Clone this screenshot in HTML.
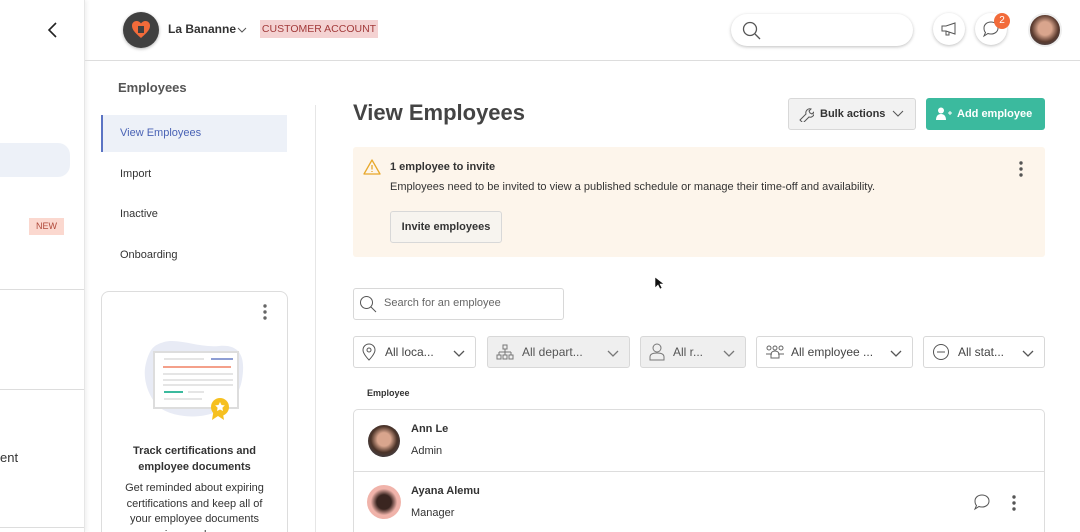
<!DOCTYPE html>
<html><head><meta charset="utf-8"><style>
*{box-sizing:border-box;margin:0;padding:0}
html,body{width:1080px;height:532px;overflow:hidden}
body{background:#fff;font-family:"Liberation Sans",sans-serif;color:#333;position:relative}
.a{position:absolute}
.dd{position:absolute;top:336px;height:32px;border:1px solid #d8d8d8;border-radius:3px;font-size:12px;color:#444;display:flex;align-items:center;padding-left:8px}
.dd .ch{position:absolute;right:10px;top:13px}
</style></head><body>
<div class="a" style="left:0;top:0;width:85px;height:532px;background:#fff;border-right:1px solid #e6e6e6;box-shadow:2px 0 4px rgba(0,0,0,.06)"></div>
<svg class="a" style="left:47px;top:22px" width="12" height="16"><path d="M9 1L2 8l7 7" stroke="#222" stroke-width="1.6" fill="none"/></svg>
<div class="a" style="left:0;top:143px;width:70px;height:34px;background:#edf1f8;border-radius:0 12px 12px 0"></div>
<div class="a" style="left:29px;top:218px;width:35px;height:17px;background:#fbd8cf;color:#b0493a;font-size:9px;text-align:center;line-height:17px">NEW</div>
<div class="a" style="left:0;top:289px;width:84px;border-top:1px solid #ddd"></div>
<div class="a" style="left:0;top:389px;width:84px;border-top:1px solid #ddd"></div>
<div class="a" style="left:0;top:527px;width:84px;border-top:1px solid #ddd"></div>
<div class="a" style="left:0;top:450px;font-size:13px;color:#333">ent</div>
<div class="a" style="left:85px;top:60px;width:995px;border-top:1px solid #ddd"></div>
<div class="a" style="left:123px;top:12px;width:36px;height:36px;border-radius:50%;background:#404040;box-shadow:0 1px 3px rgba(0,0,0,.3)"></div>
<svg class="a" style="left:130px;top:18px" width="22" height="22" viewBox="0 0 22 22"><path d="M11 20C4 14 2 11 2 7.5 2 5 4 3 6.5 3 8.5 3 10 4 11 5.5 12 4 13.5 3 15.5 3 18 3 20 5 20 7.5 20 11 18 14 11 20z" fill="#f26b3a"/><rect x="8" y="8" width="6" height="7" fill="#404040"/></svg>
<div class="a" style="left:168px;top:22px;font-size:12px;color:#333;font-weight:bold">La Bananne</div>
<svg class="a" style="left:237px;top:27px" width="10" height="7"><path d="M1 1l4 4 4-4" stroke="#555" fill="none"/></svg>
<div class="a" style="left:260px;top:20px;width:118px;height:18px;background:#f4d2d2;color:#a33b3b;font-size:10.5px;text-align:center;line-height:18px">CUSTOMER ACCOUNT</div>
<div class="a" style="left:731px;top:14px;width:182px;height:32px;border-radius:16px;box-shadow:0 1px 3px rgba(0,0,0,.25)"></div>
<svg class="a" style="left:742px;top:21px" width="20" height="20"><circle cx="8" cy="8" r="6.5" stroke="#555" stroke-width="1.3" fill="none"/><path d="M13 13l5 5" stroke="#555" stroke-width="1.3"/></svg>
<div class="a" style="left:933px;top:13px;width:32px;height:32px;border-radius:50%;box-shadow:0 1px 3px rgba(0,0,0,.25)"></div>
<svg class="a" style="left:940px;top:21px" width="18" height="16"><path d="M2 5h4l9-3v11l-9-3H2z M6 10v4h3v-3" stroke="#555" fill="none"/></svg>
<div class="a" style="left:975px;top:13px;width:32px;height:32px;border-radius:50%;box-shadow:0 1px 3px rgba(0,0,0,.25)"></div>
<svg class="a" style="left:982px;top:20px" width="18" height="18"><path d="M9 2c4 0 7 2.5 7 6s-3 6-7 6c-1 0-2 0-3-.5L2 16l1.5-3.5C2.5 11.5 2 10 2 8c0-3.5 3-6 7-6z" stroke="#555" fill="none"/></svg>
<div class="a" style="left:994px;top:13px;width:16px;height:16px;border-radius:50%;background:#f26b3a;color:#fff;font-size:10px;text-align:center;line-height:16px">2</div>
<div class="a" style="left:1028px;top:13px;width:34px;height:34px;border-radius:50%;background:radial-gradient(circle at 50% 45%,#d9a58d 30%,#5a3a2e 60%,#3b4a5e 100%);border:2px solid #eee"></div>
<div class="a" style="left:118px;top:80px;font-size:13px;color:#555;font-weight:bold">Employees</div>
<div class="a" style="left:101px;top:115px;width:186px;height:37px;background:#edf1f8;border-left:2px solid #5b74c4"></div>
<div class="a" style="left:120px;top:127px;font-size:11px;color:#4a63b5">View Employees</div>
<div class="a" style="left:120px;top:168px;font-size:11px;color:#333">Import</div>
<div class="a" style="left:120px;top:208px;font-size:11px;color:#333">Inactive</div>
<div class="a" style="left:120px;top:249px;font-size:11px;color:#333">Onboarding</div>
<div class="a" style="left:315px;top:105px;height:427px;border-left:1px solid #e6e6e6"></div>
<div class="a" style="left:101px;top:291px;width:187px;height:250px;border:1px solid #ddd;border-radius:8px"></div>
<svg class="a" style="left:262px;top:303px" width="6" height="18"><circle cx="3" cy="3" r="1.7" fill="#666"/><circle cx="3" cy="9" r="1.7" fill="#666"/><circle cx="3" cy="15" r="1.7" fill="#666"/></svg>
<svg class="a" style="left:144px;top:338px" width="104" height="86" viewBox="0 0 104 86"><path d="M20 4c15-4 35 6 55 4s25 10 24 25-5 30-25 40-50 5-60-5S-2 40 2 25 10 7 20 4z" fill="#e8ebf5"/><rect x="10" y="14" width="84" height="56" fill="#fff" stroke="#ddd" stroke-width="2"/><rect x="20" y="20" width="40" height="2" fill="#e5e5e5"/><rect x="67" y="20" width="22" height="2" fill="#8e9ed4"/><rect x="19" y="28" width="68" height="2" fill="#f4a08a"/><rect x="19" y="35" width="70" height="2" fill="#e5e5e5"/><rect x="19" y="41" width="70" height="2" fill="#e5e5e5"/><rect x="19" y="46" width="70" height="2" fill="#e5e5e5"/><rect x="20" y="53" width="19" height="2" fill="#3bba9e"/><rect x="44" y="53" width="16" height="2" fill="#e5e5e5"/><rect x="20" y="60" width="38" height="2" fill="#e5e5e5"/><path d="M70 70l-2 12 6-4 6 4-2-12z" fill="#f6c020"/><circle cx="76" cy="69" r="9" fill="#f6c020"/><path d="M76 64l1.5 3 3.3.4-2.4 2.3.6 3.3L76 71.5l-3 1.5.6-3.3-2.4-2.3 3.3-.4z" fill="#fff"/></svg>
<div class="a" style="left:101px;top:444px;width:187px;text-align:center;font-size:11px;font-weight:bold;color:#333;line-height:15.5px">Track certifications and<br>employee documents</div>
<div class="a" style="left:101px;top:481px;width:187px;text-align:center;font-size:11px;color:#333;line-height:15.5px">Get reminded about expiring<br>certifications and keep all of<br>your employee documents<br>in one place</div>
<div class="a" style="left:353px;top:100px;font-size:22px;color:#444;font-weight:bold">View Employees</div>
<div class="a" style="left:788px;top:98px;width:128px;height:32px;background:#f2f2f2;border:1px solid #d8d8d8;border-radius:3px"></div>
<svg class="a" style="left:798px;top:106px" width="16" height="16"><path d="M2 14l6-6a4 4 0 0 1 5-5l-2 2 1 2 2 1 2-2a4 4 0 0 1-5 5l-6 6z" stroke="#555" fill="none"/></svg>
<div class="a" style="left:820px;top:108px;font-size:11px;font-weight:bold;color:#333">Bulk actions</div>
<svg class="a" style="left:892px;top:110px" width="12" height="8"><path d="M1 1l5 5 5-5" stroke="#555" fill="none"/></svg>
<div class="a" style="left:926px;top:98px;width:119px;height:32px;background:#3bba9e;border-radius:3px"></div>
<svg class="a" style="left:936px;top:107px" width="16" height="13"><circle cx="5" cy="3.5" r="3" fill="#fff"/><path d="M0 13c0-4 2-6 5-6s5 2 5 6z" fill="#fff"/><path d="M12 6h4M14 4v4" stroke="#fff"/></svg>
<div class="a" style="left:957px;top:108px;font-size:11px;font-weight:bold;color:#fff">Add employee</div>
<div class="a" style="left:353px;top:147px;width:692px;height:110px;background:#fdf5eb;border-radius:3px"></div>
<svg class="a" style="left:363px;top:159px" width="18" height="16"><path d="M9 1L17 15H1z" stroke="#e8a82b" stroke-width="1.3" fill="none" stroke-linejoin="round"/><path d="M9 6v4.5M9 12v1" stroke="#e8a82b" stroke-width="1.3"/></svg>
<div class="a" style="left:390px;top:161px;font-size:11px;font-weight:bold;color:#333">1 employee to invite</div>
<div class="a" style="left:390px;top:181px;font-size:11px;color:#333">Employees need to be invited to view a published schedule or manage their time-off and availability.</div>
<svg class="a" style="left:1018px;top:160px" width="6" height="18"><circle cx="3" cy="3" r="1.7" fill="#555"/><circle cx="3" cy="9" r="1.7" fill="#555"/><circle cx="3" cy="15" r="1.7" fill="#555"/></svg>
<div class="a" style="left:390px;top:211px;width:112px;height:32px;background:#f7f4ef;border:1px solid #d8d8d8;border-radius:3px;font-size:11px;font-weight:bold;color:#333;text-align:center;line-height:30px">Invite employees</div>
<svg class="a" style="left:654px;top:276px" width="10" height="15"><path d="M1 1v11l3-3 2 4 2-1-2-4h4z" fill="#111" stroke="#fff" stroke-width=".6"/></svg>
<div class="a" style="left:353px;top:288px;width:211px;height:32px;border:1px solid #d8d8d8;border-radius:3px"></div>
<svg class="a" style="left:359px;top:295px" width="18" height="18"><circle cx="7.5" cy="7.5" r="6" stroke="#555" fill="none"/><path d="M12 12l5 5" stroke="#555"/></svg>
<div class="a" style="left:384px;top:297px;font-size:11px;color:#666">Search for an employee</div>
<div class="dd" style="left:353px;width:123px"><svg width="14" height="18"><path d="M7 17s-6-6-6-10a6 6 0 0 1 12 0c0 4-6 10-6 10z" stroke="#555" fill="none"/><circle cx="7" cy="7" r="2" stroke="#555" fill="none"/></svg><span style="margin-left:9px">All loca...</span><svg class="ch" width="12" height="8"><path d="M1 1l5 5 5-5" stroke="#555" stroke-width="1.3" fill="none"/></svg></div>
<div class="dd" style="left:487px;width:143px;background:#efefef"><svg width="18" height="16"><path d="M7 1h4v4H7zM9 5v3M3 8h12M3 8v3M9 8v3M15 8v3M1 11h4v4H1zM7 11h4v4H7zM13 11h4v4h-4z" stroke="#777" fill="none"/></svg><span style="margin-left:8px;color:#555">All depart...</span><svg class="ch" width="12" height="8"><path d="M1 1l5 5 5-5" stroke="#777" stroke-width="1.3" fill="none"/></svg></div>
<div class="dd" style="left:640px;width:106px;background:#efefef"><svg width="16" height="18"><circle cx="8" cy="5" r="4" stroke="#777" fill="none"/><path d="M1 17v-3c0-3 3-4 7-4s7 1 7 4v3z" stroke="#777" fill="none"/></svg><span style="margin-left:8px;color:#555">All r...</span><svg class="ch" width="12" height="8"><path d="M1 1l5 5 5-5" stroke="#777" stroke-width="1.3" fill="none"/></svg></div>
<div class="dd" style="left:756px;width:157px"><svg width="20" height="14"><circle cx="4" cy="3" r="2" stroke="#666" fill="none"/><circle cx="10" cy="3" r="2" stroke="#666" fill="none"/><circle cx="16" cy="3" r="2" stroke="#666" fill="none"/><path d="M1 9h6M13 9h6M6 13V9a4 3 0 0 1 8 0v4z" stroke="#666" fill="none"/></svg><span style="margin-left:6px">All employee ...</span><svg class="ch" width="12" height="8"><path d="M1 1l5 5 5-5" stroke="#555" stroke-width="1.3" fill="none"/></svg></div>
<div class="dd" style="left:923px;width:122px"><svg width="18" height="18"><circle cx="9" cy="9" r="7.5" stroke="#555" fill="none"/><path d="M5 9h8" stroke="#555"/></svg><span style="margin-left:8px">All stat...</span><svg class="ch" width="12" height="8"><path d="M1 1l5 5 5-5" stroke="#555" stroke-width="1.3" fill="none"/></svg></div>
<div class="a" style="left:367px;top:388px;font-size:9px;color:#333;font-weight:bold">Employee</div>
<div class="a" style="left:353px;top:409px;width:692px;height:140px;border:1px solid #ddd;border-radius:5px"></div>
<div class="a" style="left:353px;top:471px;width:692px;border-top:1px solid #ddd"></div>
<div class="a" style="left:368px;top:425px;width:32px;height:32px;border-radius:50%;background:radial-gradient(circle at 50% 45%,#d9a58d 28%,#4b3328 55%,#3b4a5e 100%)"></div>
<div class="a" style="left:411px;top:423px;font-size:11px;font-weight:bold;color:#333">Ann Le</div>
<div class="a" style="left:411px;top:445px;font-size:11px;color:#333">Admin</div>
<div class="a" style="left:367px;top:485px;width:34px;height:34px;border-radius:50%;background:radial-gradient(circle at 50% 50%,#3a2520 30%,#f0b3aa 55%)"></div>
<div class="a" style="left:411px;top:485px;font-size:11px;font-weight:bold;color:#333">Ayana Alemu</div>
<div class="a" style="left:411px;top:507px;font-size:11px;color:#333">Manager</div>
<svg class="a" style="left:973px;top:494px" width="18" height="17"><path d="M9 1c4 0 7 2.5 7 6s-3 6-7 6c-1 0-2 0-3-.5L2 15l1.5-3.5C2.5 10.5 2 9 2 7c0-3.5 3-6 7-6z" stroke="#555" fill="none"/></svg>
<svg class="a" style="left:1011px;top:494px" width="6" height="18"><circle cx="3" cy="3" r="1.7" fill="#555"/><circle cx="3" cy="9" r="1.7" fill="#555"/><circle cx="3" cy="15" r="1.7" fill="#555"/></svg>
</body></html>
